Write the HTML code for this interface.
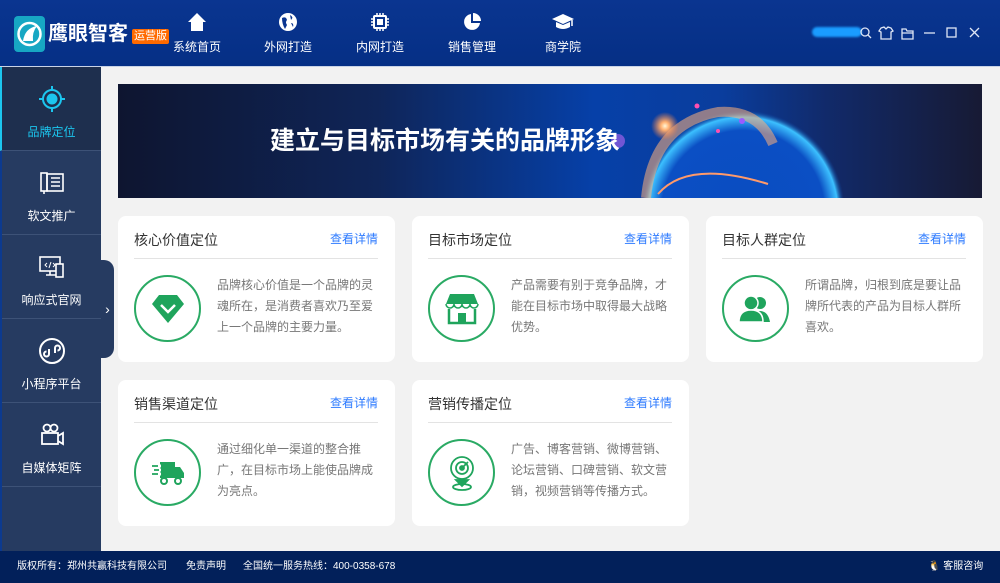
<!DOCTYPE html>
<html><head><meta charset="utf-8"><style>
*{margin:0;padding:0;box-sizing:border-box}
body{width:1000px;height:583px;overflow:hidden;position:relative;background:#f2f2f2;font-family:"Liberation Sans","Noto Sans CJK SC",sans-serif}
.hd{position:absolute;left:0;top:0;width:1000px;height:67px;background:linear-gradient(180deg,#0a3590,#052f85);border-bottom:1px solid #c8d3e6}
.logo{position:absolute;left:14px;top:16px;width:31px;height:36px;border-radius:4px;background:#17a7c3}
.brand{position:absolute;left:48px;top:18px;color:#fff;font-size:20px;font-weight:bold;line-height:32px;letter-spacing:0}
.tag{position:absolute;left:132px;top:29px;background:#ff6a00;color:#fff;font-size:11px;line-height:15px;padding:0 2px;border-radius:2px}
.nav{position:absolute;top:12px;width:70px;text-align:center;color:#fff;font-size:12px}
.nav svg{display:block;margin:0 auto 6px}
.side{position:absolute;left:0;top:67px;width:101px;height:484px;background:#263b61;border-left:2px solid #0c3a8f}
.si{height:84px;border-bottom:1px solid #3d5277;text-align:center;color:#fff;font-size:12px;padding-top:18px}
.si svg{display:block;margin:0 auto 10px}
.si.act{background:#1e2f4e;color:#1cc6ef;border-left:2px solid #1cc6ef;margin-left:-2px}
.tab{position:absolute;left:101px;top:260px;width:13px;height:98px;background:#263b61;border-radius:0 10px 10px 0;color:#fff;font-size:14px;line-height:98px;text-align:center}
.banner{position:absolute;left:118px;top:84px;width:864px;height:114px;background:linear-gradient(90deg,#0e1530 0%,#0f2558 30%,#0640a8 55%,#0a3d9d 70%,#112a6a 82%,#171a34 100%);overflow:hidden}
.banner h1{position:absolute;left:152px;top:37px;color:#fff;font-size:25px;font-weight:bold}
.card{position:absolute;width:277px;height:146px;background:#fff;border-radius:8px}
.card .t{position:absolute;left:16px;top:14px;font-size:14px;color:#333}
.card .l{position:absolute;right:17px;top:14px;font-size:12px;color:#2e7bff}
.card .d{position:absolute;left:16px;right:17px;top:42px;border-top:1px solid #e3e3e3}
.card .c{position:absolute;left:16px;top:59px;width:67px;height:67px;border:2px solid #2aaa64;border-radius:50%}
.card .c svg{position:absolute;left:50%;top:50%;transform:translate(-50%,-50%)}
.card .p{position:absolute;left:99px;top:59px;width:160px;font-size:12px;line-height:21px;color:#777}
.ft{position:absolute;left:0;top:551px;width:1000px;height:32px;background:#02205a;color:#fff;font-size:10px;line-height:32px}
</style></head><body>
<div class="hd">
 <div class="logo"><svg width="31" height="36" viewBox="0 0 31 36"><circle cx="15.5" cy="18" r="11" fill="none" stroke="#fff" stroke-width="2.5"/><path d="M9 25 Q11 12 23 10 Q18 16 19 25Z" fill="#fff"/></svg></div>
 <div class="brand">鹰眼智客</div>
 <div class="tag">运营版</div>
 <div class="nav" style="left:162px"><svg width="20" height="20" viewBox="0 0 20 20"><path d="M10 1 L19 10 H16 V19 H4 V10 H1Z" fill="#fff"/></svg>系统首页</div>
 <div class="nav" style="left:253px"><svg width="20" height="20" viewBox="0 0 20 20"><circle cx="10" cy="10" r="9" fill="#fff"/><path d="M4 6 Q8 4 9 8 Q7 10 9 13 L7 17 Q4 12 4 6Z M12 3 Q16 5 13 8Z M13 11 Q16 11 15 15 Z" fill="#0a3590"/></svg>外网打造</div>
 <div class="nav" style="left:345px"><svg width="20" height="20" viewBox="0 0 20 20"><rect x="4" y="4" width="12" height="12" rx="1" fill="none" stroke="#fff" stroke-width="2"/><rect x="7" y="7" width="6" height="6" fill="#fff"/><path d="M7 1v3M10 1v3M13 1v3M7 16v3M10 16v3M13 16v3M1 7h3M1 10h3M1 13h3M16 7h3M16 10h3M16 13h3" stroke="#fff" stroke-width="1.5"/></svg>内网打造</div>
 <div class="nav" style="left:437px"><svg width="20" height="20" viewBox="0 0 20 20"><path d="M9 2 A8 8 0 1 0 18 11 H9Z" fill="#fff"/><path d="M11 1 A8 8 0 0 1 19 9 H11Z" fill="#fff"/></svg>销售管理</div>
 <div class="nav" style="left:528px"><svg width="24" height="20" viewBox="0 0 24 20"><path d="M12 2 L23 7 L12 12 L1 7Z" fill="#fff"/><path d="M5 10 V15 Q12 19 19 15 V10 L12 13Z" fill="#fff"/><path d="M21 8v6" stroke="#fff" stroke-width="1.5"/></svg>商学院</div>
 <div style="position:absolute;left:812px;top:27px;width:50px;height:10px;border-radius:5px;background:#1a9cff;filter:blur(1px)"></div>
 <svg style="position:absolute;left:858px;top:25px" width="140" height="16" viewBox="0 0 140 16" fill="none" stroke="#dfe6f5" stroke-width="1.3"><circle cx="7" cy="7" r="4"/><path d="M10 10l3 3"/><path d="M23 3l3-1 2 2 2-2 3 1 2 3-2 1v7h-10v-7l-2-1z"/><path d="M44 4h4l1 2h6v8h-11z M44 8h11"/><path d="M66 8h11"/><rect x="89" y="3" width="9" height="9"/><path d="M112 3l9 9M121 3l-9 9"/></svg>
</div>
<div class="side">
 <div class="si act"><svg width="28" height="28" viewBox="0 0 28 28"><circle cx="14" cy="14" r="9" fill="none" stroke="#1cc6ef" stroke-width="2"/><circle cx="14" cy="14" r="5.5" fill="#1cc6ef"/><path d="M14 1v4M14 23v4M1 14h4M23 14h4" stroke="#1cc6ef" stroke-width="2"/></svg>品牌定位</div>
 <div class="si"><svg width="28" height="28" viewBox="0 0 28 28" fill="none" stroke="#fff" stroke-width="1.6"><rect x="3" y="4" width="6" height="18"/><rect x="9" y="5" width="16" height="17"/><path d="M13 9h9M13 13h9M13 17h9M6 22v3"/></svg>软文推广</div>
 <div class="si"><svg width="28" height="28" viewBox="0 0 28 28" fill="none" stroke="#fff" stroke-width="1.6"><rect x="2" y="4" width="20" height="14"/><path d="M8 22h10M12 18v4"/><rect x="18" y="11" width="7" height="13" fill="#263b61"/><path d="M9 10l-2 2 2 2M15 10l2 2-2 2M13 9l-2 6" stroke-width="1"/></svg>响应式官网</div>
 <div class="si"><svg width="28" height="28" viewBox="0 0 28 28" fill="none" stroke="#fff" stroke-width="2"><circle cx="14" cy="14" r="12"/><path d="M11 12v5a2.5 2.5 0 1 1-2.5-2.5M17 16v-5a2.5 2.5 0 1 1 2.5 2.5"/></svg>小程序平台</div>
 <div class="si"><svg width="28" height="28" viewBox="0 0 28 28" fill="none" stroke="#fff" stroke-width="1.8"><circle cx="9" cy="7" r="3.5"/><circle cx="16" cy="7" r="3.5"/><rect x="4" y="12" width="16" height="11"/><path d="M20 15l5-3v11l-5-3"/></svg>自媒体矩阵</div>
</div>
<div class="tab">›</div>
<div class="banner">
 <svg style="position:absolute;left:480px;top:0" width="300" height="114" viewBox="0 0 300 114"><defs><radialGradient id="g" cx="50%" cy="50%" r="50%"><stop offset="0" stop-color="#0a4cc0"/><stop offset=".8" stop-color="#0b4fc4"/><stop offset=".93" stop-color="#3cc0ff"/><stop offset="1" stop-color="#0a3a9a" stop-opacity="0"/></radialGradient><radialGradient id="o" cx="50%" cy="50%" r="50%"><stop offset="0" stop-color="#fff6d8"/><stop offset=".3" stop-color="#ffb070"/><stop offset="1" stop-color="#ff8040" stop-opacity="0"/></radialGradient></defs><circle cx="145" cy="128" r="102" fill="url(#g)"/><path d="M48 114 Q55 40 120 28 Q160 25 175 60" fill="none" stroke="#ffb07a" stroke-width="10" opacity=".55"/><path d="M60 110 Q90 75 170 100" fill="none" stroke="#ff9a6a" stroke-width="2"/><circle cx="67" cy="42" r="14" fill="url(#o)"/><circle cx="99" cy="22" r="2.5" fill="#ff4fb0"/><circle cx="144" cy="37" r="3" fill="#9a5cff"/><circle cx="120" cy="47" r="2" fill="#ff4fb0"/><circle cx="20" cy="57" r="7" fill="#8b5ce0" opacity=".8"/></svg>
 <h1>建立与目标市场有关的品牌形象</h1>
</div>

<div class="card" style="left:118px;top:216px"><div class="t">核心价值定位</div><div class="l">查看详情</div><div class="d"></div><div class="c"><svg width="34" height="30" viewBox="0 0 34 30"><path d="M8 1h18l7 9-16 19L1 10z" fill="#1fa45c"/><path d="M10 11l7 7 7-7" fill="none" stroke="#fff" stroke-width="2.5"/></svg></div><div class="p">品牌核心价值是一个品牌的灵魂所在，是消费者喜欢乃至爱上一个品牌的主要力量。</div></div>
<div class="card" style="left:412px;top:216px"><div class="t">目标市场定位</div><div class="l">查看详情</div><div class="d"></div><div class="c"><svg width="34" height="32" viewBox="0 0 34 32"><path d="M5 1h24l4 10H1z" fill="#1fa45c"/><path d="M1 11a4 4 0 0 0 8 0a4 4 0 0 0 8 0a4 4 0 0 0 8 0a4 4 0 0 0 8 0" fill="#fff" stroke="#1fa45c" stroke-width="1.5"/><path d="M4 16v14h26V16" fill="none" stroke="#1fa45c" stroke-width="2.5"/><rect x="13" y="20" width="8" height="10" fill="#1fa45c"/></svg></div><div class="p">产品需要有别于竞争品牌，才能在目标市场中取得最大战略优势。</div></div>
<div class="card" style="left:706px;top:216px"><div class="t">目标人群定位</div><div class="l">查看详情</div><div class="d"></div><div class="c"><svg width="36" height="28" viewBox="0 0 36 28"><circle cx="22" cy="8" r="6" fill="#1fa45c"/><path d="M14 27q0-11 8-11t10 11z" fill="#1fa45c"/><circle cx="13" cy="8" r="7" fill="#1fa45c" stroke="#fff" stroke-width="1.5"/><path d="M1 27q0-12 12-12t12 12z" fill="#1fa45c" stroke="#fff" stroke-width="1.5"/></svg></div><div class="p">所谓品牌，归根到底是要让品牌所代表的产品为目标人群所喜欢。</div></div>
<div class="card" style="left:118px;top:380px"><div class="t">销售渠道定位</div><div class="l">查看详情</div><div class="d"></div><div class="c"><svg width="34" height="26" viewBox="0 0 34 26"><path d="M9 2h15v16H9zM24 7h5l4 6v5h-9z" fill="#1fa45c"/><path d="M1 6h9M3 10h7M1 14h9" stroke="#fff" stroke-width="3"/><path d="M1 6h6M3 10h5M1 14h6" stroke="#1fa45c" stroke-width="1.8"/><circle cx="13" cy="21" r="3" fill="#fff" stroke="#1fa45c" stroke-width="2"/><circle cx="27" cy="21" r="3" fill="#fff" stroke="#1fa45c" stroke-width="2"/></svg></div><div class="p">通过细化单一渠道的整合推广，在目标市场上能使品牌成为亮点。</div></div>
<div class="card" style="left:412px;top:380px"><div class="t">营销传播定位</div><div class="l">查看详情</div><div class="d"></div><div class="c"><svg width="30" height="36" viewBox="0 0 30 36" fill="none" stroke="#1fa45c" stroke-width="1.8"><circle cx="15" cy="13" r="11"/><circle cx="15" cy="13" r="6"/><circle cx="15" cy="13" r="2" fill="#1fa45c"/><path d="M15 13l6-6"/><path d="M9 25l6 6 6-6z" fill="#1fa45c"/><ellipse cx="15" cy="32" rx="9" ry="3"/></svg></div><div class="p">广告、博客营销、微博营销、论坛营销、口碑营销、软文营销，视频营销等传播方式。</div></div>

<div class="ft"><span style="position:absolute;left:17px">版权所有：郑州共赢科技有限公司</span><span style="position:absolute;left:186px">免责声明</span><span style="position:absolute;left:243px">全国统一服务热线：400-0358-678</span><span style="position:absolute;left:928px">🐧 客服咨询</span></div>
</body></html>
